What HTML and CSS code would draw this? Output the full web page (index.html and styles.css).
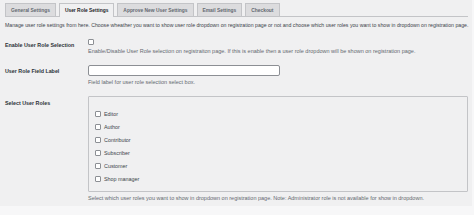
FILE: index.html
```html
<!DOCTYPE html>
<html lang="en">
<head>
    <meta charset="UTF-8">
    <title>User Role Settings</title>
    <link rel="stylesheet" href="styles.css">
</head>
<body>
    <div class="wrap">
        <div class="tabs">
            <a class="tab">General Settings</a>
            <a class="tab active">User Role Settings</a>
            <a class="tab">Approve New User Settings</a>
            <a class="tab">Email Settings</a>
            <a class="tab">Checkout</a>
        </div>

        <p class="intro">Manage user role settings from here. Choose wheather you want to show user role dropdown on registration page or not and choose which user roles you want to show in dropdown on registration page.</p>

        <div class="form-row row-enable">
            <div class="label">Enable User Role Selection</div>
            <div class="field">
                <span class="check"></span>
                <p class="help">Enable/Disable User Role selection on registraiton page. If this is enable then a user role dropdown will be shown on registration page.</p>
            </div>
        </div>

        <div class="form-row row-input">
            <div class="label">User Role Field Label</div>
            <div class="field">
                <div class="text-input"></div>
                <p class="help">Field label for user role selection select box.</p>
            </div>
        </div>

        <div class="form-row row-roles">
            <div class="label">Select User Roles</div>
            <div class="field">
                <div class="roles-box">
                    <label class="role"><span class="check small"></span>Editor</label>
                    <label class="role"><span class="check small"></span>Author</label>
                    <label class="role"><span class="check small"></span>Contributor</label>
                    <label class="role"><span class="check small"></span>Subscriber</label>
                    <label class="role"><span class="check small"></span>Customer</label>
                    <label class="role"><span class="check small"></span>Shop manager</label>
                </div>
                <p class="help">Select which user roles you want to show in dropdown on registration page. Note: Administrator role is not available for show in dropdown.</p>
            </div>
        </div>
    </div>
</body>
</html>
```

FILE: styles.css
```css
* {
    margin: 0;
    padding: 0;
    box-sizing: border-box;
}

body {
    background: #f7f7f8;
    font-family: "Liberation Sans", Arial, sans-serif;
    color: #2c3338;
}

.wrap {
    width: 472px;
    height: 206px;
    background: #f0f0f1;
    padding: 3px 0 0 5px;
}

.tabs {
    display: flex;
    gap: 3px;
    height: 14px;
    border-bottom: 1px solid #c3c4c7;
    margin-right: 4px;
}

.tab {
    display: flex;
    align-items: center;
    padding: 0 5px;
    background: #dcdcde;
    border: 1px solid #c3c4c7;
    border-bottom: none;
    font-size: 4.9px;
    font-weight: bold;
    color: #646970;
}

.tab.active {
    background: #f0f0f1;
    color: #1d2327;
    margin-bottom: -1px;
}

.intro {
    font-size: 5.2px;
    color: #3c434a;
    margin-top: 5px;
    white-space: nowrap;
}

.form-row {
    display: flex;
}

.label {
    width: 83px;
    font-size: 5.35px;
    font-weight: bold;
    color: #2c3338;
    flex-shrink: 0;
}

.help {
    font-size: 5.5px;
    color: #646970;
    white-space: nowrap;
}

.check {
    display: block;
    width: 6px;
    height: 6px;
    border: 0.5px solid #8c8f94;
    border-radius: 1px;
    background: #fff;
}

.row-enable {
    margin-top: 11px;
}

.row-enable .label {
    padding-top: 3px;
}

.row-enable .help {
    margin-top: 3px;
}

.row-input {
    margin-top: 11px;
}

.row-input .label {
    padding-top: 3px;
}

.text-input {
    width: 192px;
    height: 11px;
    background: #fff;
    border: 0.5px solid #8c8f94;
    border-radius: 2px;
}

.row-input .help {
    margin-top: 3px;
}

.row-roles {
    margin-top: 11px;
}

.row-roles .label {
    padding-top: 4px;
}

.roles-box {
    width: 380px;
    height: 96px;
    border: 0.5px solid #c3c4c7;
    border-radius: 1px;
    padding: 14px 0 0 6px;
    display: flex;
    flex-direction: column;
    gap: 7px;
}

.role {
    display: flex;
    align-items: center;
    gap: 3px;
    font-size: 5.4px;
    color: #3c434a;
    height: 6px;
}

.row-roles .help {
    margin-top: 3px;
}
```
